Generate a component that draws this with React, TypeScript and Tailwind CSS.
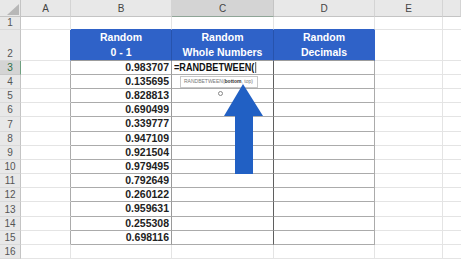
import React from 'react'

const NUMBERS = [
  '0.983707',
  '0.135695',
  '0.828813',
  '0.690499',
  '0.339777',
  '0.947109',
  '0.921504',
  '0.979495',
  '0.792649',
  '0.260122',
  '0.959631',
  '0.255308',
  '0.698116',
]

// rows 7 and 13 are a pixel taller so the grid lands where Excel put it
const TALL_ROWS = [7, 13]

function RowHead({ n, active }: { n: number; active?: boolean }) {
  return (
    <div
      className={
        active
          ? 'w-[21px] shrink-0 flex items-end justify-center border-r border-b border-r-[#6f9f80] border-b-[#c8c8c8] bg-[#d4d4d4] text-[10px] leading-[13px] text-[#2a6e45]'
          : 'w-[21px] shrink-0 flex items-end justify-center border-r border-b border-r-[#c4c4c4] border-b-[#d9d9d9] bg-[#e8e8e8] text-[10px] leading-[13px] text-[#555]'
      }
    >
      {n}
    </div>
  )
}

function ColHead({ label, w, active }: { label: string; w: string; active?: boolean }) {
  return (
    <div
      className={`${w} shrink-0 flex items-center justify-center border-r border-b text-[10px] ${
        active
          ? 'bg-[#d4d4d4] border-r-[#c4c4c4] border-b-[#8fa597] text-[#444]'
          : 'bg-[#e8e8e8] border-r-[#d4d4d4] border-b-[#c4c4c4] text-[#444]'
      }`}
    >
      {label}
    </div>
  )
}

export default function App() {
  return (
    <div className="relative w-[461px] h-[259px] overflow-hidden bg-white font-['Liberation_Sans',Arial,sans-serif] text-[#222]">
      {/* column headers */}
      <div className="flex h-[17px]">
        <div className="w-[21px] shrink-0 border-r border-b border-[#c4c4c4] bg-[#e8e8e8]">
          <svg width="20" height="16" viewBox="0 0 20 16">
            <polygon points="7,15 19,15 19,4" fill="#b7b7b7" />
          </svg>
        </div>
        <ColHead label="A" w="w-[50px]" />
        <ColHead label="B" w="w-[101px]" />
        <ColHead label="C" w="w-[102px]" active />
        <ColHead label="D" w="w-[101px]" />
        <ColHead label="E" w="w-[68px]" />
        <ColHead label="" w="flex-1" />
      </div>

      {/* row 1 */}
      <div className="flex h-[13px]">
        <RowHead n={1} />
        <div className="w-[50px] shrink-0 border-r border-b border-[#e4e4e4]" />
        <div className="w-[101px] shrink-0 border-r border-b border-r-[#e4e4e4] border-b-[#2f62c8]" />
        <div className="w-[102px] shrink-0 border-r border-b border-r-[#e4e4e4] border-b-[#2f62c8]" />
        <div className="w-[101px] shrink-0 border-r border-b border-r-[#e4e4e4] border-b-[#2f62c8]" />
        <div className="w-[68px] shrink-0 border-r border-b border-[#e4e4e4]" />
        <div className="flex-1 border-b border-[#e4e4e4]" />
      </div>

      {/* row 2: table headings */}
      <div className="flex h-[31px]">
        <RowHead n={2} />
        <div className="w-[50px] shrink-0 border-r border-b border-r-[#2f62c8] border-b-[#e4e4e4]" />
        <div className="w-[101px] shrink-0 flex flex-col items-center justify-center border-r border-b border-r-[#2753ad] border-b-[#9c9c9c] bg-[#2f62c8] text-[10.5px] font-bold leading-[15px] text-white">
          <span>Random</span>
          <span>0 - 1</span>
        </div>
        <div className="w-[102px] shrink-0 flex flex-col items-center justify-center border-r border-b border-r-[#2753ad] border-b-[#9c9c9c] bg-[#2f62c8] text-[10.5px] font-bold leading-[15px] text-white">
          <span>Random</span>
          <span>Whole Numbers</span>
        </div>
        <div className="w-[101px] shrink-0 flex flex-col items-center justify-center border-r border-b border-r-[#2f62c8] border-b-[#9c9c9c] bg-[#2f62c8] text-[10.5px] font-bold leading-[15px] text-white">
          <span>Random</span>
          <span>Decimals</span>
        </div>
        <div className="w-[68px] shrink-0 border-r border-b border-[#e4e4e4]" />
        <div className="flex-1 border-b border-[#e4e4e4]" />
      </div>

      {/* rows 3-15: data */}
      {NUMBERS.map((value, i) => {
        const n = i + 3
        return (
          <div key={n} className={TALL_ROWS.includes(n) ? 'flex h-[15px]' : 'flex h-[14px]'}>
            <RowHead n={n} active={n === 3} />
            <div className="w-[50px] shrink-0 border-r border-b border-r-[#ababab] border-b-[#e4e4e4]" />
            <div className="w-[101px] shrink-0 flex items-center justify-end pr-[2px] border-r border-b border-r-[#9a9a9a] border-b-[#ababab] text-[10.5px] font-bold text-[#222]">
              {value}
            </div>
            <div className="w-[102px] shrink-0 flex items-center pl-[2px] border-r border-b border-r-[#5f5f5f] border-b-[#ababab]">
              {n === 3 && (
                <span className="flex origin-left scale-x-[0.83] items-center whitespace-nowrap text-[11px] font-bold text-[#111]">
                  =RANDBETWEEN(
                  <span className="ml-px h-[11px] w-px bg-[#333]" />
                </span>
              )}
            </div>
            <div className="w-[101px] shrink-0 border-r border-b border-[#ababab]" />
            <div className="w-[68px] shrink-0 border-r border-b border-[#e4e4e4]" />
            <div className="flex-1 border-b border-[#e4e4e4]" />
          </div>
        )
      })}

      {/* row 16 */}
      <div className="flex h-[14px]">
        <RowHead n={16} />
        <div className="w-[50px] shrink-0 border-r border-b border-[#e4e4e4]" />
        <div className="w-[101px] shrink-0 border-r border-b border-[#e4e4e4]" />
        <div className="w-[102px] shrink-0 border-r border-b border-[#e4e4e4]" />
        <div className="w-[101px] shrink-0 border-r border-b border-[#e4e4e4]" />
        <div className="w-[68px] shrink-0 border-r border-b border-[#e4e4e4]" />
        <div className="flex-1 border-b border-[#e4e4e4]" />
      </div>

      {/* formula tooltip */}
      <div className="absolute left-[180px] top-[76px] flex h-[12px] w-[78px] items-center border border-[#c8c8c8] bg-white px-[3px] text-[5px] whitespace-nowrap text-[#777]">
        RANDBETWEEN(<span className="font-bold text-[#333]">bottom</span>, top)
      </div>

      {/* mouse pointer */}
      <div className="absolute left-[218px] top-[91px] h-[5px] w-[5px] rounded-full border border-[#888] bg-white" />

      {/* arrow */}
      <svg className="absolute left-0 top-0" width="461" height="259" viewBox="0 0 461 259">
        <polygon points="243,84 263,116 253,116 253,174 235,174 235,116 224,116" fill="#2160c4" />
      </svg>
    </div>
  )
}
